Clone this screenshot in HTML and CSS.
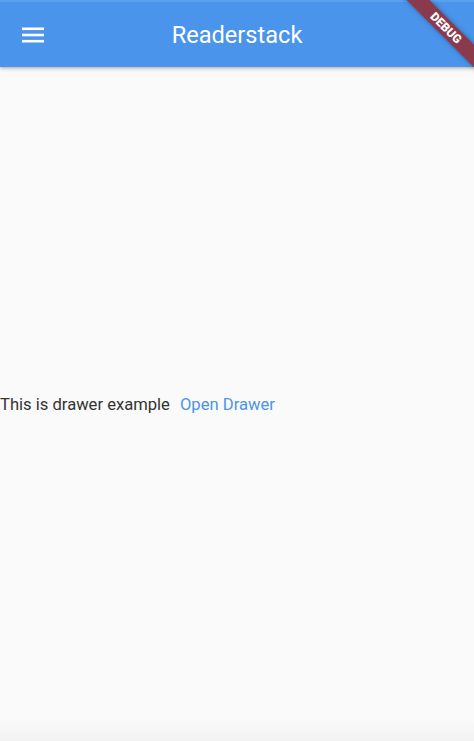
FILE: index.html
```html
<!DOCTYPE html>
<html lang="en">
<head>
<meta charset="utf-8">
<title>Readerstack</title>
<link rel="stylesheet" href="styles.css">
</head>
<body>
<div class="app">
  <header class="appbar">
    <button class="menu-btn" aria-label="Open navigation menu">
      <svg width="22" height="16" viewBox="0 0 22 16" aria-hidden="true">
        <rect x="0" y="0.5" width="22" height="2.6" fill="#fff"/>
        <rect x="0" y="6.7" width="22" height="2.6" fill="#fff"/>
        <rect x="0" y="12.9" width="22" height="2.6" fill="#fff"/>
      </svg>
    </button>
    <h1 class="title">Readerstack</h1>
  </header>
  <main class="content">
    <div class="row">
      <span class="label">This is drawer example</span>
      <a class="link" href="#">Open Drawer</a>
    </div>
  </main>
  <div class="bottom-fade"></div>
  <div class="debug-clip"><div class="debug-band">DEBUG</div></div>
</div>
</body>
</html>
```
FILE: styles.css
```css
html, body {
  margin: 0;
  padding: 0;
  background: #fafafa;
}
body {
  font-family: Roboto, "Noto Sans", sans-serif;
}
.app {
  width: 474px;
  height: 741px;
  display: flex;
  flex-direction: column;
  position: relative;
  overflow: hidden;
  background: #fafafa;
}
.appbar {
  position: relative;
  flex: 0 0 auto;
  height: 65px;
  border-top: 2px solid #5a9ff0;
  background: #4a94ec;
  display: flex;
  align-items: center;
  justify-content: center;
  box-shadow: 0 2px 4px rgba(0,0,0,0.18), 0 1px 2px rgba(0,0,0,0.12);
  z-index: 2;
}
.menu-btn {
  position: absolute;
  left: 22px;
  top: 25px;
  width: 22px;
  height: 16px;
  padding: 0;
  border: 0;
  background: none;
  display: block;
}
.menu-btn svg { display: block; }
.title {
  margin: 0;
  font-weight: 400;
  font-size: 23.6px;
  color: #fff;
}
/* Flutter debug banner overlay in the top-right corner */
.debug-clip {
  position: absolute;
  right: 0;
  top: 0;
  width: 80px;
  height: 80px;
  overflow: hidden;
  pointer-events: none;
  z-index: 5;
}
.debug-band {
  position: absolute;
  left: -3.4px;
  top: 20.4px;
  width: 110px;
  height: 16px;
  line-height: 16px;
  background: #8a3a4c;
  color: #fff;
  font-family: Roboto, "Noto Sans", sans-serif;
  font-weight: 900;
  font-size: 12px;
  text-align: center;
  transform-origin: 50% 50%;
  transform: rotate(45deg);
  box-shadow: 0 0 5px rgba(0,0,0,0.35);
}
.content {
  flex: 1 1 auto;
  display: flex;
  align-items: center;
}
.row {
  display: flex;
  align-items: center;
  gap: 10px;
  font-size: 16.6px;
}
.label {
  color: #333;
}
.link {
  color: #4a94ec;
  text-decoration: none;
}
.bottom-fade {
  position: absolute;
  left: 0;
  right: 0;
  bottom: 0;
  height: 22px;
  background: linear-gradient(to bottom, rgba(0,0,0,0), rgba(0,0,0,0.035));
  pointer-events: none;
}
```
